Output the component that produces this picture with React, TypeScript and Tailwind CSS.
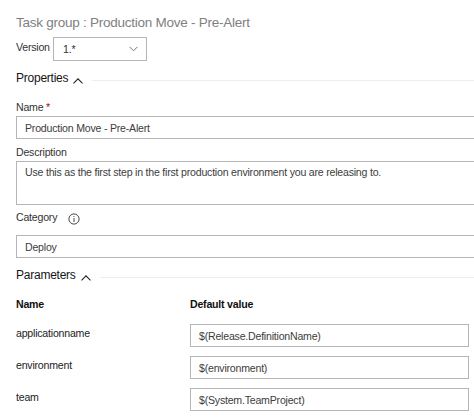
import type { ReactNode } from 'react';

const parameters = [
  { name: 'applicationname', value: '$(Release.DefinitionName)' },
  { name: 'environment', value: '$(environment)' },
  { name: 'team', value: '$(System.TeamProject)' },
];

function ChevronUp() {
  return (
    <svg width="10" height="6" viewBox="0 0 10 6" fill="none" stroke="#222" strokeWidth="1.1" className="mt-[5px]">
      <path d="M.5 5.4 5 .9l4.5 4.5" />
    </svg>
  );
}

function SectionHeader({ title }: { title: string }) {
  return (
    <div className="flex h-4 items-center">
      <h2 className="text-[12px] leading-4 tracking-[-0.24px] text-[#151515]">{title}</h2>
      <span className="ml-[5px]">
        <ChevronUp />
      </span>
      <div className="mt-1 ml-[9px] h-px flex-1 bg-[#eeeeee]" />
    </div>
  );
}

function Field({ children, className = '' }: { children: ReactNode; className?: string }) {
  return (
    <div className={`border-y border-l border-[#b5b5b5] px-2 text-[#3d3d3d] ${className}`}>
      {children}
    </div>
  );
}

export default function App() {
  return (
    <div className="h-[418px] w-[474px] overflow-hidden bg-white pt-[14px] pl-4 font-['Liberation_Sans',Arial,sans-serif] text-[10.6px] tracking-[-0.22px] text-[#333333]">
      <h1 className="h-[23px] text-[13.5px] leading-[17px] tracking-[-0.25px] text-[#808080]">
        Task group : Production Move - Pre-Alert
      </h1>

      <div className="flex h-[33px] items-start">
        <span className="w-[37px] leading-[20px]">Version</span>
        <div className="flex h-[24px] w-[94px] items-center justify-between border border-[#b5b5b5] pr-2 pl-[9px]">
          <span className="pt-px">1.*</span>
          <svg width="9" height="6" viewBox="0 0 9 6" fill="none" stroke="#777" strokeWidth="1">
            <path d="M.5.8l4 4 4-4" />
          </svg>
        </div>
      </div>

      <SectionHeader title="Properties" />

      <div className="mt-[13px] h-[17px] leading-[17px]">
        Name <span className="text-[#a80000]">*</span>
      </div>
      <Field className="h-[23px] leading-[22px]">Production Move - Pre-Alert</Field>

      <div className="mt-[5px] h-[17px] leading-[17px]">Description</div>
      <Field className="h-[44px] leading-[21px]">
        Use this as the first step in the first production environment you are releasing to.
      </Field>

      <div className="mt-[5px] flex h-[25px] items-start leading-[15px]">
        <span>Category</span>
        <svg width="12" height="12" viewBox="0 0 12 12" fill="none" stroke="#333" strokeWidth=".9" className="mt-[3px] ml-[11px]">
          <circle cx="6" cy="6" r="5.1" />
          <path d="M6 5v4M6 3v1" />
        </svg>
      </div>
      <Field className="h-[23px] leading-[22px]">Deploy</Field>

      <div className="mt-[9px]">
        <SectionHeader title="Parameters" />
      </div>

      <div className="mt-[13px] grid h-[28px] grid-cols-[174px_1fr] leading-4 font-bold text-[#111111]">
        <span>Name</span>
        <span>Default value</span>
      </div>

      <div className="flex flex-col gap-[9px] pr-[5px]">
        {parameters.map((param) => (
          <div key={param.name} className="grid grid-cols-[174px_1fr]">
            <span className="leading-[19px] text-[#222222]">{param.name}</span>
            <Field className="h-[23px] border-r leading-[22px]">{param.value}</Field>
          </div>
        ))}
      </div>
    </div>
  );
}
